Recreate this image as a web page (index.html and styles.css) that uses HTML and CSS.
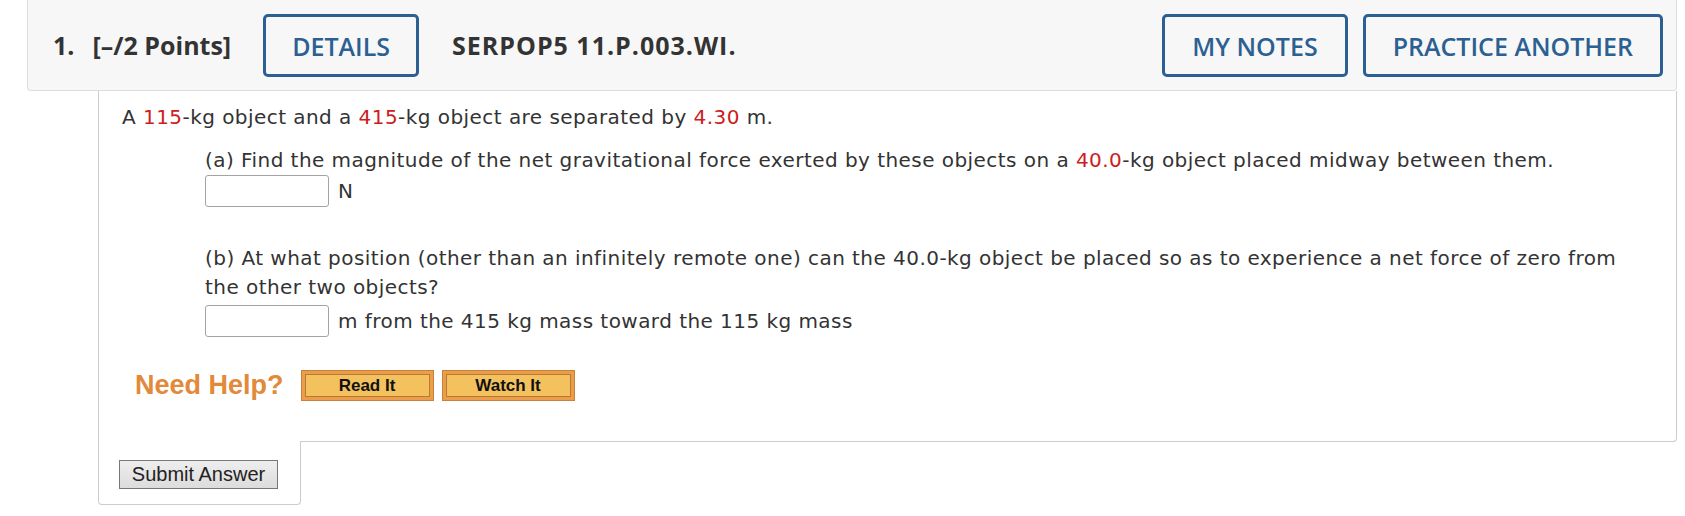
FILE: index.html
```html
<!DOCTYPE html>
<html>
<head>
<meta charset="utf-8">
<link rel="stylesheet" href="styles.css">
</head>
<body>
<div class="page">
  <div class="header">
    <span class="qnum">1.</span>
    <span class="points">[–/2 Points]</span>
    <button class="hbtn details">DETAILS</button>
    <span class="qtitle">SERPOP5 11.P.003.WI.</span>
    <span class="spacer"></span>
    <button class="hbtn">MY NOTES</button>
    <button class="hbtn gap">PRACTICE ANOTHER</button>
  </div>
  <div class="qbody">
    <p class="intro">A <span class="red">115</span>-kg object and a <span class="red">415</span>-kg object are separated by <span class="red">4.30</span> m.</p>
    <div class="part">
      <p class="ptext first">(a) Find the magnitude of the net gravitational force exerted by these objects on a <span class="red">40.0</span>-kg object placed midway between them.</p>
      <div class="ansrow"><span class="inp"></span><span class="unit">N</span></div>
      <p class="ptext second">(b) At what position (other than an infinitely remote one) can the 40.0-kg object be placed so as to experience a net force of zero from the other two objects?</p>
      <div class="ansrow r2"><span class="inp"></span><span class="unit">m from the 415 kg mass toward the 115 kg mass</span></div>
    </div>
    <div class="help">
      <span class="needhelp">Need Help?</span>
      <span class="hlp"><span class="hlpin">Read It</span></span>
      <span class="hlp"><span class="hlpin">Watch It</span></span>
    </div>
  </div>
  <div class="submittab">
    <button class="submit">Submit Answer</button>
  </div>
</div>
</body>
</html>
```

FILE: styles.css
```css
html, body {
  margin: 0;
  padding: 0;
  background: #ffffff;
}
body {
  font-family: "DejaVu Sans", Verdana, sans-serif;
  color: #333333;
}
.page {
  margin-left: 27px;
  width: 1650px;
}
.header {
  box-sizing: border-box;
  height: 91px;
  background: #f7f7f7;
  border: 1px solid #dddddd;
  border-top: none;
  border-radius: 0 0 4px 4px;
  display: flex;
  align-items: center;
  padding: 0 13px 0 25px;
  font-family: "Open Sans", sans-serif;
  font-size: 25px;
  font-weight: 700;
  color: #333333;
}
.qnum {
  margin-right: 18px;
}
.points {
  margin-right: 32px;
}
.qtitle {
  margin-left: 33px;
  letter-spacing: 1px;
}
.spacer {
  flex: 1;
}
.hbtn {
  box-sizing: border-box;
  height: 63px;
  border: 3px solid #2c5f92;
  border-radius: 5px;
  background: transparent;
  color: #2c5f92;
  font-family: "Open Sans", sans-serif;
  font-size: 25px;
  font-weight: 600;
  padding: 0 27px;
  margin-top: 1px;
}
.hbtn.details {
  padding: 0 26px;
}
.hbtn.gap {
  margin-left: 15px;
}
.qbody {
  margin-left: 71px;
  border: 1px solid #cccccc;
  border-top: none;
  border-radius: 0 0 4px 0;
  padding: 12px 40px 40px 23px;
  font-size: 20px;
  line-height: 29px;
  letter-spacing: 0.45px;
}
.red {
  color: #cc2020;
}
p {
  margin: 0;
}
.part {
  margin-left: 83px;
}
.ptext.first {
  margin-top: 14px;
}
.ptext.second {
  margin-top: 37px;
}
.ansrow {
  display: flex;
  align-items: center;
  height: 32px;
}
.ansrow.r2 {
  margin-top: 3px;
}
.inp {
  box-sizing: border-box;
  width: 124px;
  height: 32px;
  border: 1px solid #a3a3a3;
  border-radius: 3px;
  background: #ffffff;
  margin-right: 9px;
}
.help {
  display: flex;
  align-items: center;
  margin-top: 33px;
  margin-left: 13px;
  letter-spacing: 0;
}
.needhelp {
  font-family: "Liberation Sans", Arial, sans-serif;
  font-weight: 700;
  font-size: 27px;
  color: #e2893a;
  margin-right: 17px;
}
.hlp {
  box-sizing: border-box;
  display: block;
  width: 133px;
  height: 31px;
  border: 1px solid #c9813a;
  background: #eb9d4a;
  padding: 3px;
  margin-right: 8px;
}
.hlpin {
  box-sizing: border-box;
  display: flex;
  align-items: center;
  justify-content: center;
  height: 100%;
  border: 1px solid #b57a38;
  background: #f3c25f;
  font-family: "Liberation Sans", Arial, sans-serif;
  font-weight: 700;
  font-size: 17px;
  color: #111111;
}
.submittab {
  box-sizing: border-box;
  margin-left: 71px;
  margin-top: -1px;
  width: 203px;
  background: #ffffff;
  border: 1px solid #cccccc;
  border-top: none;
  border-radius: 0 0 4px 4px;
  padding: 19px 0 15px 20px;
}
.submit {
  display: block;
  box-sizing: border-box;
  height: 29px;
  width: 159px;
  border: 1px solid #777777;
  border-radius: 0;
  background: linear-gradient(#eeeeee, #dcdcdc);
  font-family: "Liberation Sans", Arial, sans-serif;
  font-size: 20px;
  color: #222222;
  padding: 0;
}
```
